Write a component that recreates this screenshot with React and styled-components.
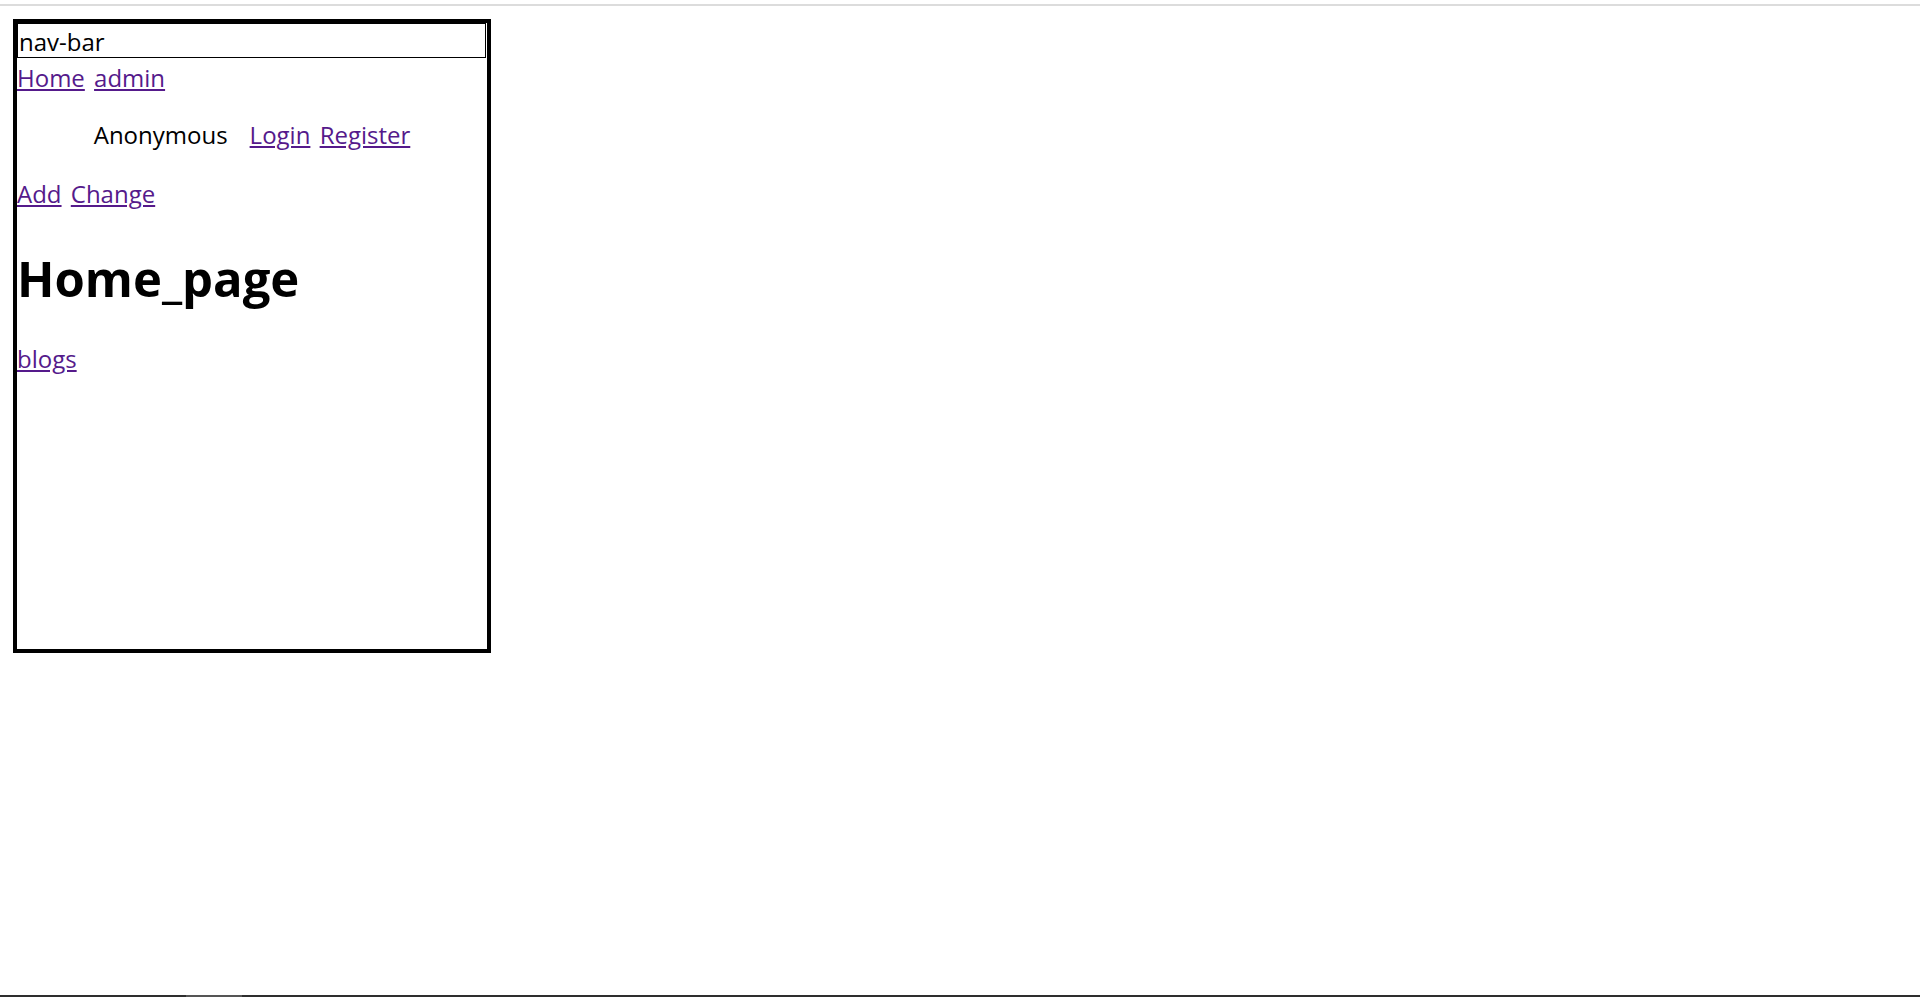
import React from "react";
import styled, { createGlobalStyle } from "styled-components";

const GlobalStyle = createGlobalStyle`
  html, body {
    margin: 0;
    padding: 0;
    background: #ffffff;
  }
  body {
    font-family: "Open Sans", "Noto Sans", sans-serif;
    font-size: 24px;
    color: #000000;
  }
`;

const Page = styled.div`
  position: relative;
  width: 1920px;
  height: 997px;
  overflow: hidden;
`;

const TopRule = styled.div`
  height: 2px;
  margin-top: 4px;
  background: #dcdcdc;
`;

const Content = styled.main`
  padding: 13px 0 0 13px;
`;

const Frame = styled.section`
  box-sizing: border-box;
  width: 478px;
  height: 634px;
  border: 4px solid #000000;
`;

const NavBar = styled.div`
  box-sizing: border-box;
  width: 469px;
  height: 35px;
  border: 1px solid #000000;
  line-height: 30px;
  padding: 3px 0 0 1px;
`;

const LinkRow = styled.div`
  line-height: 33px;
  word-spacing: 3px;
  margin: ${(p) => p.$margin || "0"};
  text-align: ${(p) => (p.$center ? "center" : "left")};
`;

const Link = styled.a`
  color: #551a8b;
  text-decoration: underline;
  text-underline-offset: 2px;
`;

const Greeting = styled.span`
  margin-right: 22px;
`;

const Heading = styled.h1`
  font-size: 49px;
  font-weight: 700;
  line-height: 68px;
  margin: 33.5px 0 30px;
`;

const ScrollTrack = styled.div`
  position: absolute;
  left: 0;
  right: 0;
  bottom: 0;
  height: 2px;
  background: #2e2e2e;
`;

const ScrollThumb = styled.div`
  position: absolute;
  left: 186px;
  top: 0;
  width: 56px;
  height: 2px;
  background: #555555;
`;

export default function App() {
  return (
    <>
      <GlobalStyle />
      <Page>
        <TopRule />
        <Content>
          <Frame>
            <NavBar>nav-bar</NavBar>
            <LinkRow $margin="2.5px 0 0">
              <Link href="#">Home</Link> <Link href="#">admin</Link>
            </LinkRow>
            <LinkRow $center $margin="24px 0 26.5px">
              <Greeting>Anonymous</Greeting>
              <Link href="#">Login</Link> <Link href="#">Register</Link>
            </LinkRow>
            <LinkRow>
              <Link href="#">Add</Link> <Link href="#">Change</Link>
            </LinkRow>
            <Heading>Home_page</Heading>
            <LinkRow>
              <Link href="#">blogs</Link>
            </LinkRow>
          </Frame>
        </Content>
        <ScrollTrack>
          <ScrollThumb />
        </ScrollTrack>
      </Page>
    </>
  );
}
